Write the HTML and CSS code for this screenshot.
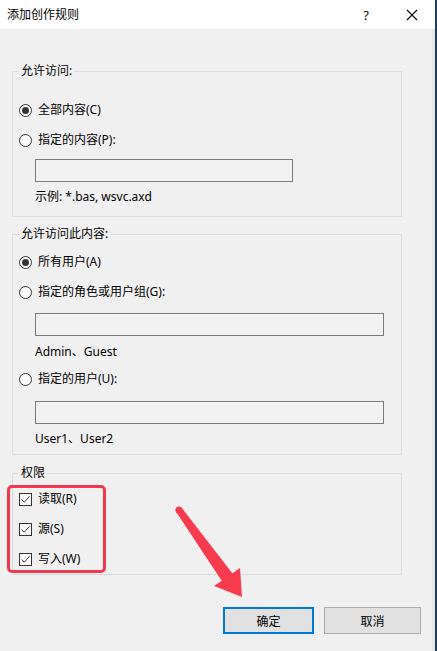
FILE: index.html
```html
<!DOCTYPE html>
<html lang="zh-CN">
<head>
<meta charset="utf-8">
<title>添加创作规则</title>
<link rel="stylesheet" href="styles.css">
</head>
<body>
<div class="window">
  <div class="titlebar">
    <div class="title">添加创作规则</div>
    <div class="tbtn help">?</div>
    <div class="tbtn close">
      <svg width="12" height="12" viewBox="0 0 12 12"><path d="M1 1 L11 11 M11 1 L1 11" stroke="#000" stroke-width="1.1" fill="none"/></svg>
    </div>
  </div>

  <fieldset class="group g1">
    <legend>允许访问:</legend>
    <div class="row r1"><span class="radio on"></span><span>全部内容(C)</span></div>
    <div class="row r2"><span class="radio"></span><span>指定的内容(P):</span></div>
    <div class="input short i1"></div>
    <div class="hint h1">示例: *.bas, wsvc.axd</div>
  </fieldset>

  <fieldset class="group g2">
    <legend>允许访问此内容:</legend>
    <div class="row r3"><span class="radio on"></span><span>所有用户(A)</span></div>
    <div class="row r4"><span class="radio"></span><span>指定的角色或用户组(G):</span></div>
    <div class="input long i2"></div>
    <div class="hint h2">Admin、Guest</div>
    <div class="row r5"><span class="radio"></span><span>指定的用户(U):</span></div>
    <div class="input long i3"></div>
    <div class="hint h3">User1、User2</div>
  </fieldset>

  <fieldset class="group g3">
    <legend>权限</legend>
    <div class="row c1"><span class="check"><svg width="11" height="11" viewBox="0 0 11 11"><path d="M1.5 5.5 L4.2 8.2 L9.6 2.3" stroke="#333" stroke-width="1" fill="none"/></svg></span><span>读取(R)</span></div>
    <div class="row c2"><span class="check"><svg width="11" height="11" viewBox="0 0 11 11"><path d="M1.5 5.5 L4.2 8.2 L9.6 2.3" stroke="#333" stroke-width="1" fill="none"/></svg></span><span>源(S)</span></div>
    <div class="row c3"><span class="check"><svg width="11" height="11" viewBox="0 0 11 11"><path d="M1.5 5.5 L4.2 8.2 L9.6 2.3" stroke="#333" stroke-width="1" fill="none"/></svg></span><span>写入(W)</span></div>
  </fieldset>

  <div class="buttons">
    <div class="btn ok">确定</div>
    <div class="btn cancel">取消</div>
  </div>
</div>

<div class="mark-box"></div>
<svg class="mark-arrow" width="437" height="651" viewBox="0 0 437 651">
  <circle cx="179" cy="510" r="3.6" fill="#f73b4e"/>
  <polygon points="181.8,507.9 232.3,573.2 240,568 242,597 214,586 221.7,580.8 176.2,512.1" fill="#f73b4e"/>
</svg>
</body>
</html>
```

FILE: styles.css
```css
html, body {
  margin: 0;
  padding: 0;
}
body {
  width: 437px;
  height: 651px;
  overflow: hidden;
  background: #f0f0f0;
  font-family: "Noto Sans", "Noto Sans CJK SC", sans-serif;
  font-size: 12px;
  color: #000;
  position: relative;
}
.window {
  width: 435px;
  height: 651px;
  background: #f0f0f0;
  border-right: 2px solid #243a5a;
  box-shadow: inset -3px 0 0 #e6e6e6;
}
.titlebar {
  height: 29px;
  background: #fff;
  display: flex;
  align-items: center;
}
.title {
  flex: 1;
  padding-left: 7px;
  line-height: 16px;
}
.tbtn {
  width: 46px;
  height: 29px;
  display: flex;
  align-items: center;
  justify-content: center;
}
.help {
  font-size: 13px;
}
.group {
  box-sizing: border-box;
  width: 390px;
  margin: 0 0 0 12px;
  padding: 0 0 0 6px;
  border: 1px solid #dcdcdc;
  min-width: 0;
}
.group legend {
  padding: 0 2px;
  line-height: 16px;
  height: 16px;
}
.g1 { margin-top: 34px; padding-bottom: 11px; }
.g2 { margin-top: 9px; padding-bottom: 7px; }
.g3 { margin-top: 10px; padding-bottom: 5px; }

.row {
  height: 20px;
  display: flex;
  align-items: center;
  gap: 6px;
  line-height: 16px;
}
.radio {
  box-sizing: border-box;
  width: 13px;
  height: 13px;
  border: 1px solid #333;
  border-radius: 50%;
  background: #fff;
  display: flex;
  align-items: center;
  justify-content: center;
  flex: none;
}
.radio.on::after {
  content: "";
  width: 7px;
  height: 7px;
  border-radius: 50%;
  background: #333;
}
.check {
  box-sizing: border-box;
  width: 13px;
  height: 13px;
  border: 1px solid #333;
  background: #fff;
  display: flex;
  align-items: center;
  justify-content: center;
  flex: none;
}
.input {
  box-sizing: border-box;
  height: 23px;
  margin-left: 16px;
  border: 1px solid #7a7a7a;
  background: #f2f2f2;
}
.input.short { width: 258px; }
.input.long { width: 349px; }
.hint {
  margin-left: 16px;
  line-height: 16px;
}
.r1 { margin-top: 21px; }
.r2 { margin-top: 10px; }
.i1 { margin-top: 9px; }
.h1 { margin-top: 7px; }

.r3 { margin-top: 10px; }
.r4 { margin-top: 10px; }
.i2 { margin-top: 11px; }
.h2 { margin-top: 8px; }
.r5 { margin-top: 9px; }
.i3 { margin-top: 12px; }
.h3 { margin-top: 7px; }

.c1 { margin-top: 8px; }
.c2 { margin-top: 10px; }
.c3 { margin-top: 10px; }

.buttons {
  display: flex;
  justify-content: flex-end;
  gap: 10px;
  margin-top: 32px;
  padding-right: 14px;
}
.btn {
  box-sizing: border-box;
  height: 27px;
  background: #e1e1e1;
  display: flex;
  align-items: center;
  justify-content: center;
}
.ok {
  width: 91px;
  border: 2px solid #0078d7;
}
.cancel {
  width: 97px;
  border: 1px solid #adadad;
}

.mark-box {
  position: absolute;
  left: 7px;
  top: 485px;
  width: 99px;
  height: 88px;
  box-sizing: border-box;
  border: 3px solid #f0394e;
  border-radius: 5px;
}
.mark-arrow {
  position: absolute;
  left: 0;
  top: 0;
}
```
